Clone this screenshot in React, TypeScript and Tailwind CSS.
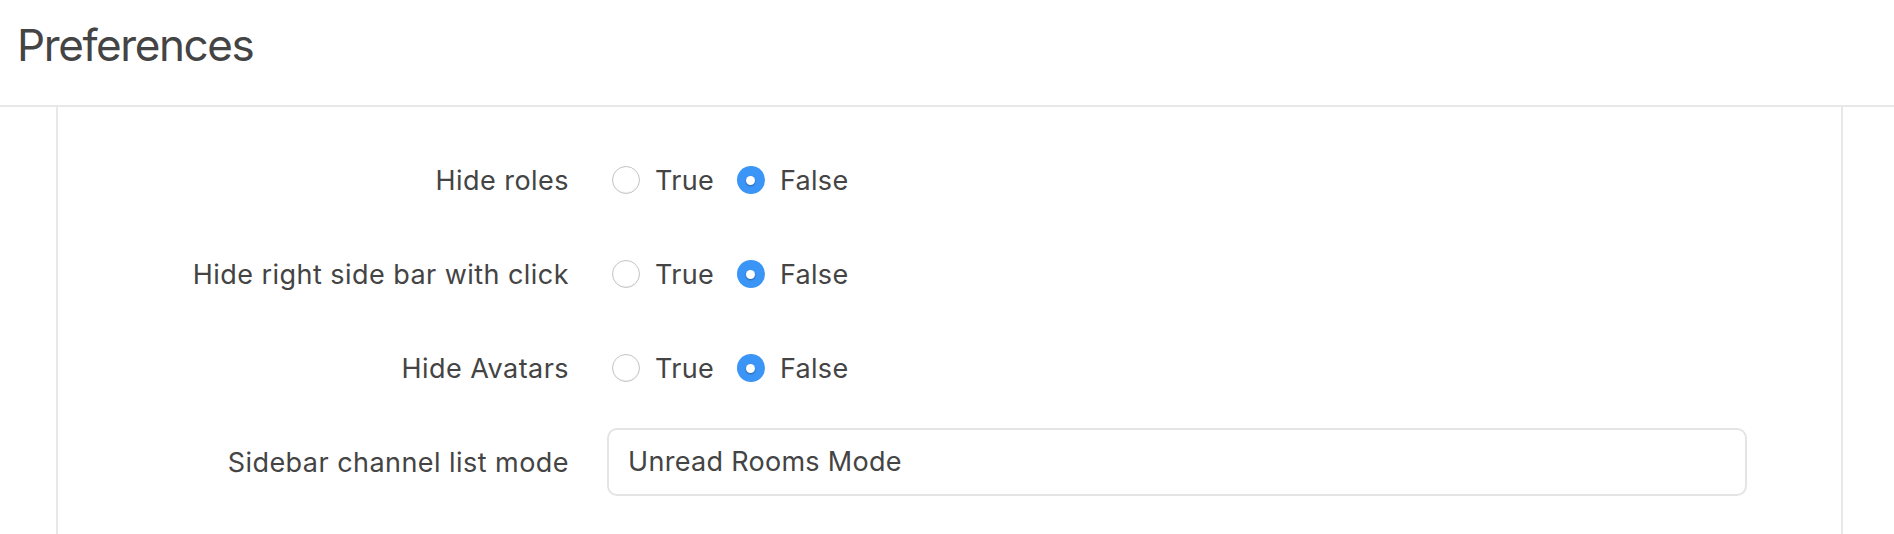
import React from 'react';

const font = { fontFamily: 'Inter, "Noto Sans", sans-serif' };

interface RadioProps {
  checked?: boolean;
  label: string;
}

const Radio: React.FC<RadioProps> = ({ checked, label }) => (
  <label className="flex items-center">
    {checked ? (
      <span className="flex h-[28px] w-[28px] items-center justify-center rounded-full bg-[#3b95f7]">
        <span className="h-[9px] w-[9px] rounded-full bg-white shadow-[0_1px_2px_rgba(0,0,0,0.35)]" />
      </span>
    ) : (
      <span className="h-[28px] w-[28px] rounded-full border-[1.5px] border-[#c4c4c4] bg-white shadow-[inset_0_-1px_1px_rgba(0,0,0,0.06)]" />
    )}
    <span className="ml-[15px] text-[27px] leading-none text-[#444] tracking-[0.3px]">{label}</span>
  </label>
);

const BoolRow: React.FC<{ label: string }> = ({ label }) => (
  <>
    <div className="text-right text-[27px] leading-none text-[#444] tracking-[0.45px]">{label}</div>
    <div className="ml-[5px] flex items-center gap-[23px]">
      <Radio label="True" />
      <Radio label="False" checked />
    </div>
  </>
);

export default function App() {
  return (
    <div className="h-[534px] w-full overflow-hidden bg-white" style={font}>
      {/* Header */}
      <header className="h-[107px] border-b-2 border-[#e8e8e8] pl-[17px] pt-[23px]">
        <h1 className="text-[44px] leading-[44px] text-[#444] tracking-[-1.4px]">Preferences</h1>
      </header>

      {/* Content */}
      <div className="mx-[56px] flex h-full border-x-2 border-[#e8e8e8] w-[1787px]">
        <div className="grid w-full grid-cols-[511px_1fr] items-center gap-x-[38px] gap-y-[26px] auto-rows-[68px] pr-[94px] pt-[39px]">
          <BoolRow label="Hide roles" />
          <BoolRow label="Hide right side bar with click" />
          <BoolRow label="Hide Avatars" />
          <div className="text-right text-[27px] leading-none text-[#444] tracking-[0.45px]">Sidebar channel list mode</div>
          <div className="flex h-[68px] items-center rounded-[10px] border-2 border-[#e4e4e4] pl-[19px] text-[27px] text-[#444] tracking-[0.3px]">
            Unread Rooms Mode
          </div>
        </div>
      </div>
    </div>
  );
}
